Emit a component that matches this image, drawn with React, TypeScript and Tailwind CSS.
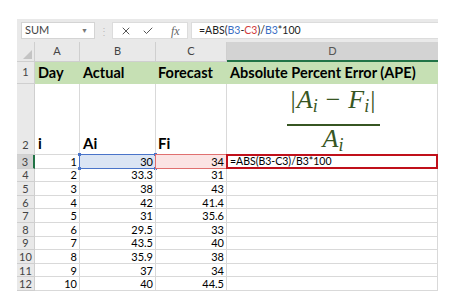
import { Check, X } from 'lucide-react'

const rows: [number, string, string, string][] = [
  [3, '1', '30', '34'],
  [4, '2', '33.3', '31'],
  [5, '3', '38', '43'],
  [6, '4', '42', '41.4'],
  [7, '5', '31', '35.6'],
  [8, '6', '29.5', '33'],
  [9, '7', '43.5', '40'],
  [10, '8', '35.9', '38'],
  [11, '9', '37', '34'],
  [12, '10', '40', '44.5'],
]

const grid = 'border-r border-b border-[#d9d9d9]'

function FormulaText() {
  return (
    <span>
      =ABS(<span className="text-[#3b6fc4]">B3</span>-<span className="text-[#d23c3c]">C3</span>)/
      <span className="text-[#3b6fc4]">B3</span>*100
    </span>
  )
}

function FormulaBar() {
  return (
    <div className="flex h-[23px] items-center bg-[#e9e9e9] pl-[4px]">
      <div className="flex h-[17px] w-[74px] items-center justify-between border border-[#d4d4d4] bg-white pl-[3px] pr-[6px] text-[11px] text-[#444]">
        <span>SUM</span>
        <span className="text-[7px] text-[#777]">▼</span>
      </div>
      <div className="flex w-[17px] justify-center text-[10px] leading-none text-[#bbb]">⋮</div>
      <div className="flex h-[17px] w-[76px] items-center border border-[#dcdcdc] bg-white pl-[7px] text-[#444]">
        <X className="h-[12px] w-[12px]" strokeWidth={1.8} />
        <Check className="ml-[10px] h-[12px] w-[12px]" strokeWidth={1.8} />
        <span className="ml-[17px] text-[12px] italic text-[#666]" style={{ fontFamily: '"Liberation Serif", serif' }}>
          fx
        </span>
      </div>
      <div className="ml-[3px] flex h-[17px] flex-1 items-center border-y border-l border-[#dcdcdc] bg-white pl-[7px] text-[10.5px] text-[#222]">
        <FormulaText />
      </div>
    </div>
  )
}

function ColumnHeaders() {
  return (
    <div className="flex h-[20px] bg-[#e9e9e9] text-[11px] text-[#444]">
      <div className="relative w-[18px] border-r border-b border-[#cfcfcf]">
        <div className="absolute bottom-[2px] right-[2px] h-0 w-0 border-b-[9px] border-l-[9px] border-b-[#c4c4c4] border-l-transparent" />
      </div>
      <div className="flex w-[45px] items-center justify-center border-r border-b border-[#cfcfcf]">A</div>
      <div className="flex w-[76px] items-center justify-center border-r border-b border-[#cfcfcf]">B</div>
      <div className="flex w-[71px] items-center justify-center border-r border-b border-[#cfcfcf]">C</div>
      <div className="flex w-[211px] items-center justify-center border-b-2 border-[#217346] bg-[#d3d3d3] text-[#555]">D</div>
    </div>
  )
}

function Fraction() {
  return (
    <div
      className="flex flex-col items-center font-normal text-[#375623] italic"
      style={{ fontFamily: '"Liberation Serif", "DejaVu Serif", serif' }}
    >
      <div className="w-[93px] whitespace-nowrap border-b-2 border-[#375623] pb-[2px] text-center text-[26px] leading-[32px]">
        <span className="not-italic">|</span>
        <span className="ml-[1px]">A</span>
        <span className="align-[-4px] text-[18px]">i</span>
        <span className="mx-[8px] not-italic">−</span>
        <span>F</span>
        <span className="align-[-4px] text-[18px]">i</span>
        <span className="ml-[1px] not-italic">|</span>
      </div>
      <div className="whitespace-nowrap text-[26px] leading-[26px]">
        <span>A</span>
        <span className="align-[-4px] text-[18px]">i</span>
      </div>
    </div>
  )
}

export default function App() {
  return (
    <div className="h-[306px] w-[474px] overflow-hidden bg-white pl-[17px] pt-[19px]" style={{ fontFamily: 'Lato, "Liberation Sans", sans-serif' }}>
      <div className="w-[421px]">
        <FormulaBar />
        <ColumnHeaders />

        {/* row 1 */}
        <div className="flex h-[22px] text-[14.5px] font-bold text-black">
          <div className="flex w-[18px] items-center justify-center border-r border-b border-[#cfcfcf] bg-[#e9e9e9] text-[11px] font-normal text-[#444]">1</div>
          <div className="flex w-[45px] items-center bg-[#c6e0b4] pl-[3px]">Day</div>
          <div className="flex w-[76px] items-center bg-[#c6e0b4] pl-[3px]">Actual</div>
          <div className="flex w-[71px] items-center bg-[#c6e0b4] pl-[2px]">Forecast</div>
          <div className="flex w-[211px] items-center bg-[#c6e0b4] pl-[3px]">Absolute Percent Error (APE)</div>
        </div>

        {/* row 2 */}
        <div className="flex h-[71px] text-[15px] font-bold text-black">
          <div className="flex w-[18px] items-end justify-center border-r border-b border-[#cfcfcf] bg-[#e9e9e9] pb-[1px] text-[11px] font-normal text-[#444]">2</div>
          <div className={`flex w-[45px] items-end pl-[3px] ${grid}`}>i</div>
          <div className={`flex w-[76px] items-end pl-[3px] ${grid}`}>Ai</div>
          <div className={`flex w-[71px] items-end pl-[2px] ${grid}`}>Fi</div>
          <div className={`flex w-[211px] justify-center pl-[2px] ${grid}`}>
            <Fraction />
          </div>
        </div>

        {rows.map(([n, a, b, c]) => {
          const sel = n === 3
          return (
            <div key={n} className="flex h-[13.6px] text-[11px] leading-none text-black">
              <div
                className={`flex w-[18px] items-center justify-center border-b border-[#cfcfcf] text-[#444] ${
                  sel ? 'border-r-2 border-r-[#217346] bg-[#d3d3d3]' : 'border-r bg-[#e9e9e9]'
                }`}
              >
                {n}
              </div>
              <div className={`flex w-[45px] items-center justify-end pr-[2px] ${grid}`}>{a}</div>
              <div className={`relative flex w-[76px] items-center justify-end pr-[2px] ${grid} ${sel ? 'bg-[#dbe5f4]' : ''}`}>
                {sel && (
                  <div className="absolute inset-[-1px] border border-[#4a74c9]">
                    <div className="absolute -left-[2px] -top-[2px] h-[3px] w-[3px] bg-[#4a74c9]" />
                    <div className="absolute -bottom-[2px] -left-[2px] h-[3px] w-[3px] bg-[#4a74c9]" />
                    <div className="absolute -right-[2px] -top-[2px] h-[3px] w-[3px] bg-[#4a74c9]" />
                    <div className="absolute -bottom-[2px] -right-[2px] h-[3px] w-[3px] bg-[#4a74c9]" />
                  </div>
                )}
                <span className="relative">{b}</span>
              </div>
              <div className={`relative flex w-[71px] items-center justify-end pr-[2px] ${grid} ${sel ? 'bg-[#fbe4e4]' : ''}`}>
                {sel && <div className="absolute inset-[-1px] border border-[#e07070]" />}
                <span className="relative">{c}</span>
              </div>
              <div className={`relative flex w-[211px] items-center pl-[3px] text-[10.5px] ${grid}`}>
                {sel && (
                  <>
                    <div className="absolute inset-[-1px] border-2 border-[#c0101a]" />
                    <span className="relative">=ABS(B3-C3)/B3*100</span>
                  </>
                )}
              </div>
            </div>
          )
        })}
      </div>
    </div>
  )
}
